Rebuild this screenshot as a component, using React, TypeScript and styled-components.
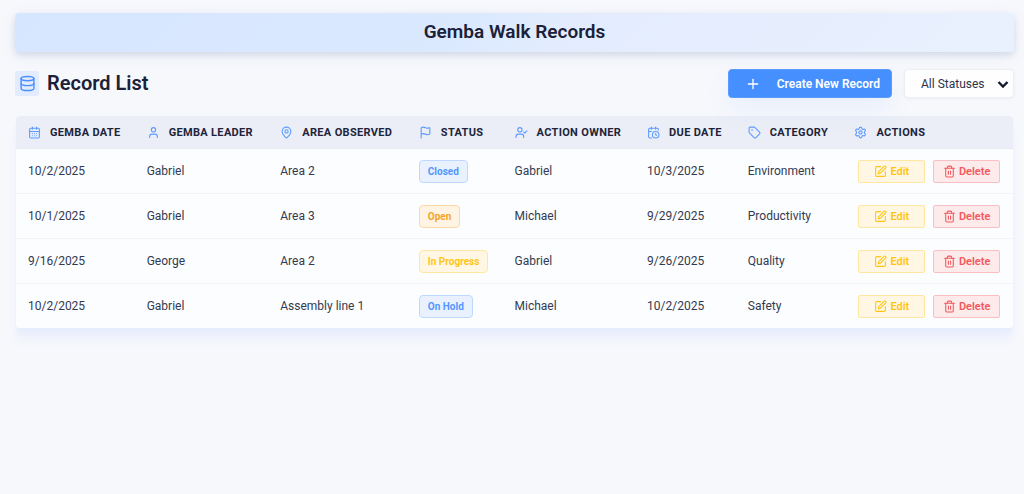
import React from "react";
import styled, { createGlobalStyle } from "styled-components";
import {
  CalendarClock,
  CalendarDays,
  Database,
  Flag,
  MapPin,
  Plus,
  Settings,
  SquarePen,
  Tag,
  Trash2,
  User,
  UserCheck,
} from "lucide-react";

const GlobalStyle = createGlobalStyle`
  * { box-sizing: border-box; }
  body {
    margin: 0;
    background: #f7f8fc;
    color: #1a2138;
    font-family: Roboto, "Liberation Sans", sans-serif;
  }
  button, select { font-family: inherit; }
`;

const Page = styled.main`
  padding: 13px 10px 24px 15px;
`;

const Banner = styled.header`
  padding: 6px 16px 7px;
  border-radius: 4px;
  background: linear-gradient(135deg, #d6e6ff 0%, #dbe9ff 45%, #e3ecfe 55%, #eaf1fe 100%);
  box-shadow: 0 3px 6px rgba(30, 50, 90, 0.12), 0 4px 16px rgba(70, 110, 200, 0.08);
  text-align: center;
`;

const BannerTitle = styled.h1`
  margin: 0;
  font-size: 19px;
  line-height: 26px;
  font-weight: 600;
`;

const Toolbar = styled.div`
  display: flex;
  align-items: center;
  justify-content: space-between;
  margin: 17px 0 18px;
`;

const TitleGroup = styled.div`
  display: flex;
  align-items: center;
  gap: 8px;
`;

const IconTile = styled.span`
  display: grid;
  place-items: center;
  width: 24px;
  height: 25px;
  border-radius: 2px;
  background: #e3ecfe;
  color: #4a90ff;
`;

const SectionTitle = styled.h2`
  margin: 0;
  font-size: 20px;
  line-height: 27px;
  font-weight: 600;
`;

const Controls = styled.div`
  display: flex;
  gap: 12px;
`;

const CreateButton = styled.button`
  display: flex;
  align-items: center;
  gap: 16px;
  height: 29px;
  padding: 0 11px 0 16px;
  border: 1px solid #5b9bff;
  border-radius: 4px;
  background: #468fff;
  color: #fff;
  font-size: 12px;
  font-weight: 600;
  box-shadow: 0 12px 24px rgba(70, 143, 255, 0.08);
`;

const SelectWrap = styled.label`
  display: block;
  position: relative;
`;

const SelectArrow = styled.svg`
  position: absolute;
  right: 5px;
  top: 11px;
  pointer-events: none;
`;

const StatusSelect = styled.select`
  appearance: none;
  width: 110px;
  height: 29px;
  padding: 0 24px 0 16px;
  border: 1px solid #eceef5;
  border-radius: 4px;
  background: #fefeff;
  color: #2c3348;
  font-size: 12px;
  box-shadow: 0 1px 3px rgba(40, 60, 110, 0.06);
`;

const TableCard = styled.section`
  margin: 0 1px;
  border-radius: 4px;
  box-shadow: 0 6px 4px rgba(70, 130, 255, 0.05), 0 14px 8px rgba(70, 130, 255, 0.04);
`;

const TableClip = styled.div`
  border-radius: 4px;
  overflow: hidden;
  background: #fcfdff;
`;

const Table = styled.table`
  width: 100%;
  table-layout: fixed;
  border-collapse: separate;
  border-spacing: 0;
`;

const HeadCell = styled.th<{ $width: string }>`
  width: ${(p) => p.$width};
  height: 33px;
  padding: 0 0 0 12px;
  background: #ebeef6;
  border-bottom: 1px solid #e7eaf3;
  color: #1d243a;
  font-size: 11px;
  font-weight: 700;
  letter-spacing: 0.03em;
  text-align: left;
  white-space: nowrap;
`;

const HeadLabel = styled.span`
  display: flex;
  align-items: center;
  gap: 9px;

  svg {
    color: #5b9bff;
  }
`;

const Cell = styled.td`
  height: 45px;
  padding: 0 0 0 12px;
  border-bottom: 1px solid #f1f3f8;
  color: #333a4f;
  font-size: 12px;
  line-height: 16px;
  white-space: nowrap;
`;

const Row = styled.tr`
  &:last-child td {
    height: 44px;
    border-bottom: 0;
  }
`;

const ActionCell = styled(Cell)`
  padding: 0 13px 0 16px;
`;

type Tone = "blue" | "orange" | "yellow" | "red";

const tones: Record<Tone, { text: string; fill: string; line: string }> = {
  blue: { text: "#5397ff", fill: "#e9f1ff", line: "#bfd8ff" },
  orange: { text: "#f5a32a", fill: "#fff4e4", line: "#fddaa6" },
  yellow: { text: "#ffc515", fill: "#fff7e3", line: "#ffe7a0" },
  red: { text: "#f4595d", fill: "#fdeaeb", line: "#f9bfc2" },
};

const Badge = styled.span<{ $tone: Tone }>`
  display: block;
  width: fit-content;
  padding: 0 8px;
  border: 1px solid ${(p) => tones[p.$tone].line};
  border-radius: 4px;
  background: ${(p) => tones[p.$tone].fill};
  color: ${(p) => tones[p.$tone].text};
  font-size: 10px;
  line-height: 21px;
  font-weight: 700;
`;

const Actions = styled.div`
  display: flex;
  gap: 8px;
`;

const ActionButton = styled.button<{ $tone: Tone }>`
  flex: 1;
  display: flex;
  align-items: center;
  justify-content: center;
  gap: 3px;
  height: 23px;
  padding: 0;
  border: 1px solid ${(p) => tones[p.$tone].line};
  border-radius: 2px;
  background: ${(p) => tones[p.$tone].fill};
  color: ${(p) => tones[p.$tone].text};
  font-size: 11px;
  font-weight: 600;
`;

const columns = [
  { label: "GEMBA DATE", Icon: CalendarDays, width: "11.9%" },
  { label: "GEMBA LEADER", Icon: User, width: "13.4%" },
  { label: "AREA OBSERVED", Icon: MapPin, width: "13.9%" },
  { label: "STATUS", Icon: Flag, width: "9.6%" },
  { label: "ACTION OWNER", Icon: UserCheck, width: "13.3%" },
  { label: "DUE DATE", Icon: CalendarClock, width: "10.1%" },
  { label: "CATEGORY", Icon: Tag, width: "10.7%" },
  { label: "ACTIONS", Icon: Settings, width: "17.1%" },
];

const records: {
  date: string;
  leader: string;
  area: string;
  status: string;
  tone: Tone;
  owner: string;
  due: string;
  category: string;
}[] = [
  { date: "10/2/2025", leader: "Gabriel", area: "Area 2", status: "Closed", tone: "blue", owner: "Gabriel", due: "10/3/2025", category: "Environment" },
  { date: "10/1/2025", leader: "Gabriel", area: "Area 3", status: "Open", tone: "orange", owner: "Michael", due: "9/29/2025", category: "Productivity" },
  { date: "9/16/2025", leader: "George", area: "Area 2", status: "In Progress", tone: "yellow", owner: "Gabriel", due: "9/26/2025", category: "Quality" },
  { date: "10/2/2025", leader: "Gabriel", area: "Assembly line 1", status: "On Hold", tone: "blue", owner: "Michael", due: "10/2/2025", category: "Safety" },
];

export default function App() {
  return (
    <>
      <GlobalStyle />
      <Page>
        <Banner>
          <BannerTitle>Gemba Walk Records</BannerTitle>
        </Banner>
        <Toolbar>
          <TitleGroup>
            <IconTile>
              <Database size={17} />
            </IconTile>
            <SectionTitle>Record List</SectionTitle>
          </TitleGroup>
          <Controls>
            <CreateButton type="button">
              <Plus size={16} strokeWidth={2} />
              Create New Record
            </CreateButton>
            <SelectWrap>
              <StatusSelect aria-label="Filter by status" defaultValue="All Statuses">
                <option>All Statuses</option>
                <option>Open</option>
                <option>In Progress</option>
                <option>On Hold</option>
                <option>Closed</option>
              </StatusSelect>
              <SelectArrow width="12" height="9" viewBox="0 0 12 9" fill="none" aria-hidden="true">
                <path d="M1.500 2 6 6.500 10.500 2" stroke="#141a30" strokeWidth="2.400" />
              </SelectArrow>
            </SelectWrap>
          </Controls>
        </Toolbar>
        <TableCard>
          <TableClip>
            <Table>
              <thead>
                <tr>
                  {columns.map(({ label, Icon, width }) => (
                    <HeadCell key={label} scope="col" $width={width}>
                      <HeadLabel>
                        <Icon size={13} />
                        {label}
                      </HeadLabel>
                    </HeadCell>
                  ))}
                </tr>
              </thead>
              <tbody>
                {records.map((r, i) => (
                  <Row key={i}>
                    <Cell>{r.date}</Cell>
                    <Cell>{r.leader}</Cell>
                    <Cell>{r.area}</Cell>
                    <Cell>
                      <Badge $tone={r.tone}>{r.status}</Badge>
                    </Cell>
                    <Cell>{r.owner}</Cell>
                    <Cell>{r.due}</Cell>
                    <Cell>{r.category}</Cell>
                    <ActionCell>
                      <Actions>
                        <ActionButton type="button" $tone="yellow">
                          <SquarePen size={13} />
                          Edit
                        </ActionButton>
                        <ActionButton type="button" $tone="red">
                          <Trash2 size={13} />
                          Delete
                        </ActionButton>
                      </Actions>
                    </ActionCell>
                  </Row>
                ))}
              </tbody>
            </Table>
          </TableClip>
        </TableCard>
      </Page>
    </>
  );
}
